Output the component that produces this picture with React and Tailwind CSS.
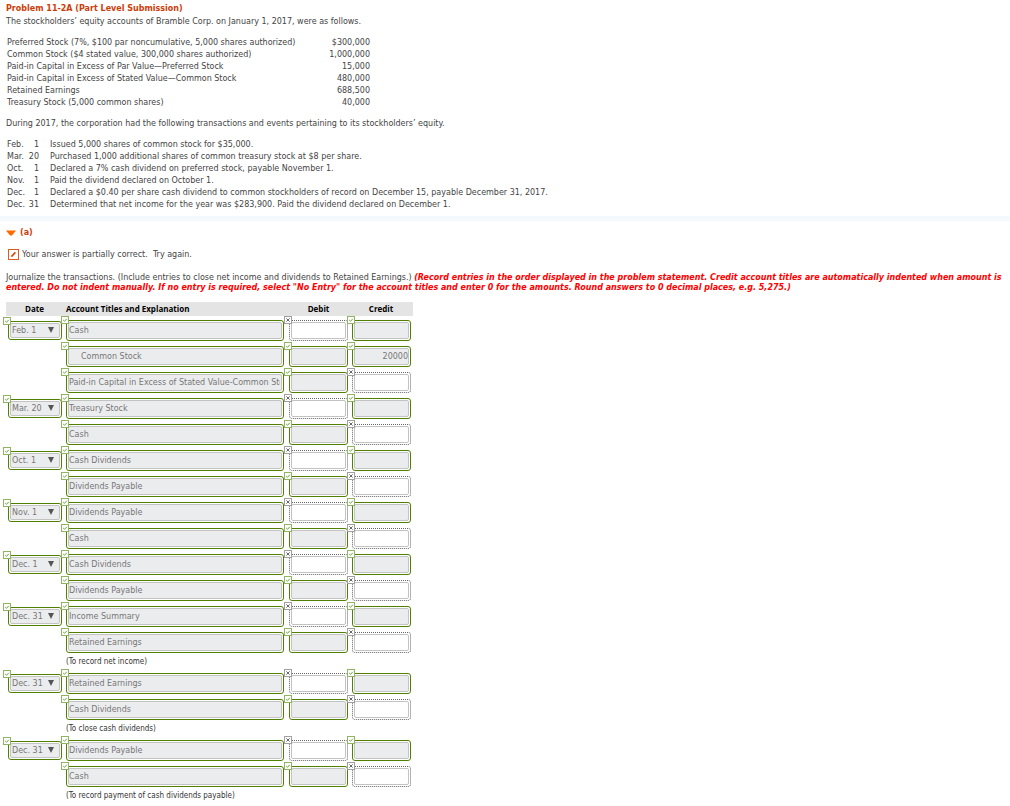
import React from "react";

const accounts = [
  ["Preferred Stock (7%, $100 par noncumulative, 5,000 shares authorized)", "$300,000"],
  ["Common Stock ($4 stated value, 300,000 shares authorized)", "1,000,000"],
  ["Paid-in Capital in Excess of Par Value—Preferred Stock", "15,000"],
  ["Paid-in Capital in Excess of Stated Value—Common Stock", "480,000"],
  ["Retained Earnings", "688,500"],
  ["Treasury Stock (5,000 common shares)", "40,000"],
];

const events = [
  ["Feb.", "1", "Issued 5,000 shares of common stock for $35,000."],
  ["Mar.", "20", "Purchased 1,000 additional shares of common treasury stock at $8 per share."],
  ["Oct.", "1", "Declared a 7% cash dividend on preferred stock, payable November 1."],
  ["Nov.", "1", "Paid the dividend declared on October 1."],
  ["Dec.", "1", "Declared a $0.40 per share cash dividend to common stockholders of record on December 15, payable December 31, 2017."],
  ["Dec.", "31", "Determined that net income for the year was $283,900. Paid the dividend declared on December 1."],
];

const dates = ["Feb. 1", "Mar. 20", "Oct. 1", "Nov. 1", "Dec. 1", "Dec. 31"];

// wrong: the amount column that is still marked incorrect
const lines = [
  { date: "Feb. 1", title: "Cash", wrong: "debit" },
  { title: "Common Stock", indent: true, credit: "20000" },
  { title: "Paid-in Capital in Excess of Stated Value-Common Stock", wrong: "credit" },
  { date: "Mar. 20", title: "Treasury Stock", wrong: "debit" },
  { title: "Cash", wrong: "credit" },
  { date: "Oct. 1", title: "Cash Dividends", wrong: "debit" },
  { title: "Dividends Payable", wrong: "credit" },
  { date: "Nov. 1", title: "Dividends Payable", wrong: "debit" },
  { title: "Cash", wrong: "credit" },
  { date: "Dec. 1", title: "Cash Dividends", wrong: "debit" },
  { title: "Dividends Payable", wrong: "credit" },
  { date: "Dec. 31", title: "Income Summary", wrong: "debit" },
  { title: "Retained Earnings", wrong: "credit" },
  { note: "(To record net income)" },
  { date: "Dec. 31", title: "Retained Earnings", wrong: "debit" },
  { title: "Cash Dividends", wrong: "credit" },
  { note: "(To close cash dividends)" },
  { date: "Dec. 31", title: "Dividends Payable", wrong: "debit" },
  { title: "Cash", wrong: "credit" },
  { note: "(To record payment of cash dividends payable)" },
];

const Badge = ({ wrong }) => (
  <svg
    viewBox="0 0 8 8"
    className="absolute -left-[6px] -top-[5px] w-2 h-2"
    fill="none"
    aria-hidden="true"
  >
    <rect x="0.5" y="0.5" width="7" height="7" fill="#fff" stroke={wrong ? "#a0a0a0" : "#8fb560"} />
    {wrong ? (
      <path d="M2.4 2.4 L5.6 5.6 M5.6 2.4 L2.4 5.6" stroke="#666" strokeWidth="1" />
    ) : (
      <path d="M2.2 4 L3.5 5.3 L5.8 2.8" stroke="#6fa03a" strokeWidth="1" />
    )}
  </svg>
);

const Field = ({ label, value = "", wrong, indent, right }) => (
  <div
    className={`relative h-[21px] rounded-[3px] border p-px ${
      wrong ? "border-dotted border-[#666]" : "border-[#4f8000] bg-white"
    }`}
  >
    <input
      type="text"
      aria-label={label}
      defaultValue={value}
      className={`block w-full h-full rounded-[2px] border border-[#c3c3c3] text-[#777] outline-none ${
        wrong ? "bg-white" : "bg-[#ebecee]"
      } ${indent ? "pl-3" : ""} ${right ? "text-right" : "pr-px"}`}
    />
    <Badge wrong={wrong} />
  </div>
);

const DateField = ({ value }) => (
  <div className="relative h-[19px] w-[54px] mt-px rounded-[3px] border border-[#4f8000] bg-white p-px">
    <select
      aria-label="Date"
      defaultValue={value}
      className="block appearance-none w-full h-full rounded-[2px] border border-[#c3c3c3] bg-[#ebecee] pl-px text-[#777] outline-none"
    >
      {dates.map((d) => (
        <option key={d}>{d}</option>
      ))}
    </select>
    <svg viewBox="0 0 6 6" className="absolute right-[7px] top-[5px] w-[6px] h-[6px] pointer-events-none">
      <path d="M0 0 H6 L3 6 Z" fill="#555" />
    </svg>
    <Badge />
  </div>
);

const App = () => {
  return (
    <main className="bg-white font-['DejaVu_Sans',Verdana,sans-serif] text-[8px] leading-3 text-[#444] pb-1">
      <section className="px-[6px] pt-[3px]">
        <h1 className="font-bold text-[#cc3d0a]">Problem 11-2A (Part Level Submission)</h1>
        <p className="mt-px">
          The stockholders’ equity accounts of Bramble Corp. on January 1, 2017, were as follows.
        </p>

        <table className="mt-[9px] ml-px w-[363px]">
          <tbody>
            {accounts.map(([name, amount]) => (
              <tr key={name}>
                <td className="p-0 whitespace-nowrap">{name}</td>
                <td className="p-0 text-right">{amount}</td>
              </tr>
            ))}
          </tbody>
        </table>

        <p className="mt-[9px]">
          During 2017, the corporation had the following transactions and events pertaining to its
          stockholders’ equity.
        </p>

        <table className="mt-[9px] ml-px">
          <tbody>
            {events.map(([month, day, text]) => (
              <tr key={text}>
                <td className="p-0 w-5">{month}</td>
                <td className="p-0 w-3 text-right">{day}</td>
                <td className="p-0 pl-[11px]">{text}</td>
              </tr>
            ))}
          </tbody>
        </table>
      </section>

      <div className="mt-[5px] h-[5px] bg-[#f4f9fd]" />

      <section className="px-[6px] pt-[6px]">
        <h2 className="flex items-center gap-1 font-bold text-[#cc3d0a]">
          <svg viewBox="0 0 10 6" className="w-[10px] h-[6px]" aria-hidden="true">
            <path d="M0 0.5 H10 L6 5.5 H4 Z" fill="#ff6a00" />
          </svg>
          (a)
        </h2>

        <p className="mt-[10px] ml-[2px] flex items-start gap-[3px]">
          <svg viewBox="0 0 11 11" className="w-[11px] h-[11px]" fill="none" aria-hidden="true">
            <rect x="0.5" y="0.5" width="10" height="10" stroke="#e05a1e" />
            <path d="M3.4 7.6 L7.4 3.4" stroke="#d8430c" strokeWidth="1.6" />
          </svg>
          <span>Your answer is partially correct.&nbsp; Try again.</span>
        </p>

        <p className="mt-3 leading-[10px]">
          Journalize the transactions. (Include entries to close net income and dividends to Retained
          Earnings.){" "}
          <em className="font-bold text-[#f00]">
            (Record entries in the order displayed in the problem statement. Credit account titles are
            automatically indented when amount is entered. Do not indent manually. If no entry is
            required, select "No Entry" for the account titles and enter 0 for the amounts. Round
            answers to 0 decimal places, e.g. 5,275.)
          </em>
        </p>

        <table className="mt-[9px] w-[407px] table-fixed">
          <colgroup>
            <col className="w-[60px]" />
            <col className="w-[223px]" />
            <col className="w-[63px]" />
            <col className="w-[61px]" />
          </colgroup>
          <thead>
            <tr className="h-[14px] bg-[#e4e4e4] font-['Open_Sans',sans-serif] text-black">
              <th className="p-0 pr-[3px]">Date</th>
              <th className="p-0 text-left">Account Titles and Explanation</th>
              <th className="p-0 pr-1">Debit</th>
              <th className="p-0 pr-[3px]">Credit</th>
            </tr>
          </thead>
          <tbody>
            {lines.map((line, i) =>
              line.note ? (
                <tr key={i} className="h-[15px] align-top">
                  <td className="p-0" />
                  <td
                    colSpan={3}
                    className="p-0 pt-[2px] font-['DejaVu_Sans_Condensed','Open_Sans',sans-serif] text-[#333]"
                  >
                    {line.note}
                  </td>
                </tr>
              ) : (
                <tr key={i} className="align-top">
                  <td className="p-0 pt-1 pl-[2px]">{line.date && <DateField value={line.date} />}</td>
                  <td className="p-0 pt-1 pb-px pr-[5px]">
                    <Field label="Account title" value={line.title} indent={line.indent} />
                  </td>
                  <td className="p-0 pt-1 pb-px pr-1">
                    <Field label="Debit" wrong={line.wrong === "debit"} right />
                  </td>
                  <td className="p-0 pt-1 pb-px pr-[2px]">
                    <Field label="Credit" value={line.credit} wrong={line.wrong === "credit"} right />
                  </td>
                </tr>
              )
            )}
          </tbody>
        </table>
      </section>
    </main>
  );
};

export default App;
